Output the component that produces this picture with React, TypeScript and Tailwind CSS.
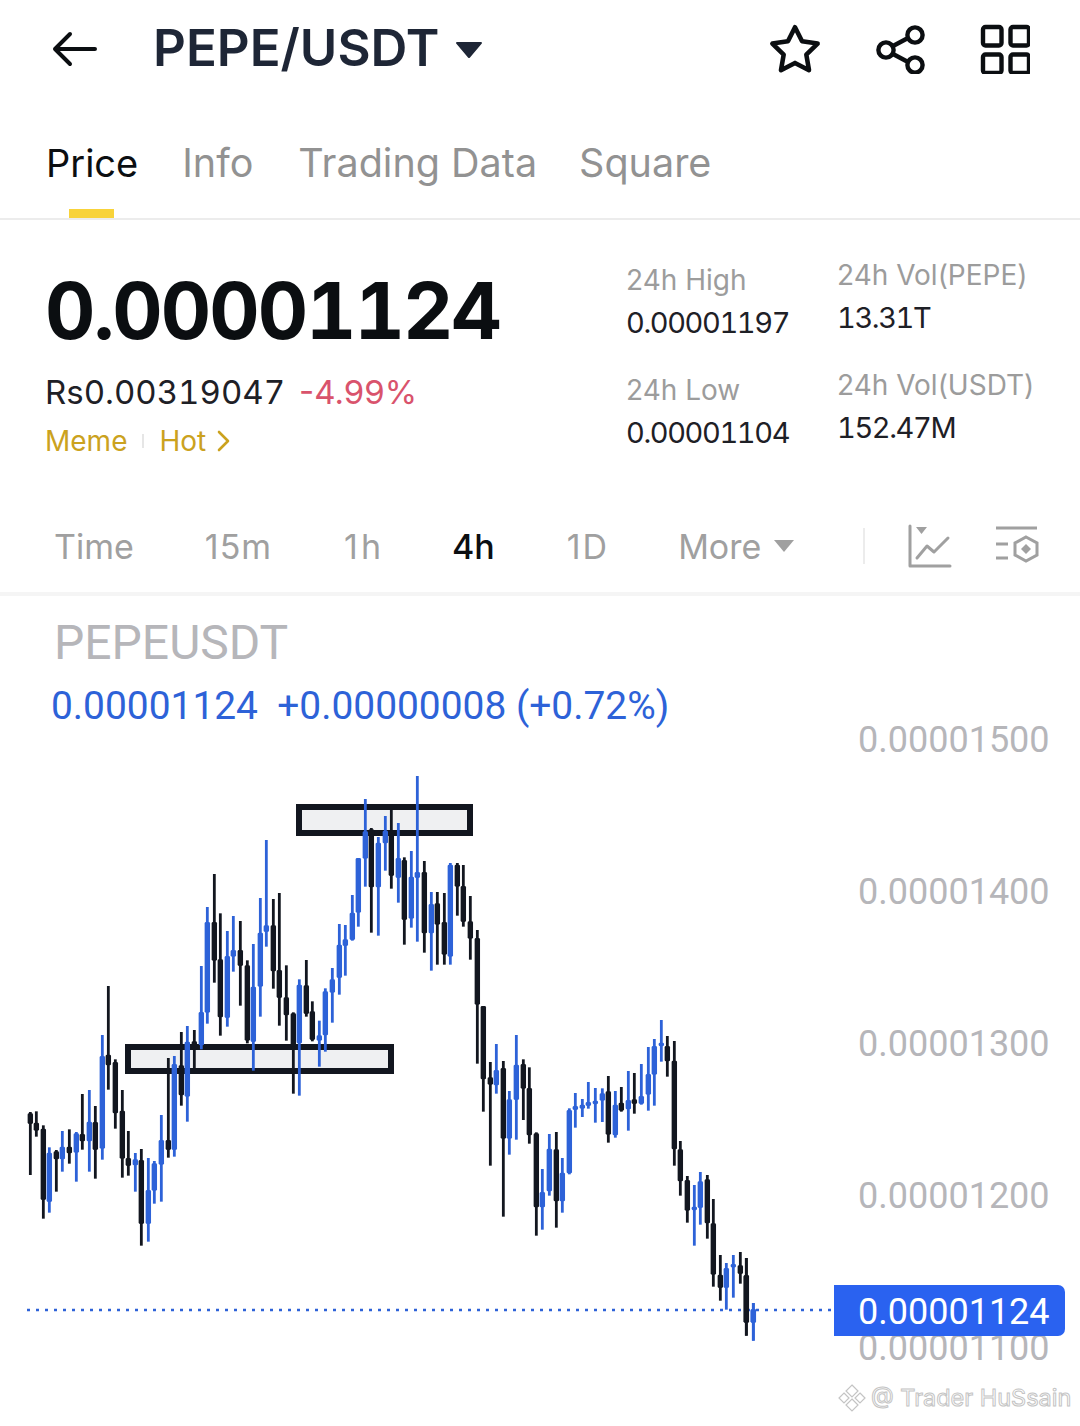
import React from "react";

const Z4: [number, number, number, number, number, string][] = [
  [31,1026,1215,1030,1062,"k"],[49,1024,1100,1058,1082,"k"],[70,1066,1346,1076,1290,"k"],[88,1132,1328,1148,1296,"b"],
  [109,1140,1265,1144,1168,"k"],[127,1083,1205,1130,1168,"b"],[148,1078,1181,1130,1150,"k"],[169,1086,1235,1090,1148,"b"],
  [187,972,1139,1092,1114,"k"],[208,960,1205,1055,1114,"b"],[226,1008,1226,1056,1140,"k"],[247,795,1169,858,1136,"b"],
  [265,648,959,854,886,"k"],[286,868,1076,876,1030,"k"],[307,960,1223,1022,1166,"k"],[325,1083,1217,1164,1188,"k"],
  [346,1149,1265,1168,1186,"b"],[364,1137,1427,1170,1362,"k"],[385,1164,1415,1260,1362,"b"],[403,1173,1301,1180,1262,"b"],
  [424,1035,1295,1110,1184,"b"],[445,864,1163,1110,1140,"k"],[463,858,1160,882,1140,"b"],[484,786,1007,886,976,"k"],
  [502,768,1055,815,980,"b"],[523,780,895,814,838,"k"],[544,588,838,726,826,"b"],[562,411,761,456,728,"b"],
  [583,312,638,456,572,"k"],[601,430,797,568,742,"k"],[622,483,770,558,744,"b"],[640,438,605,540,560,"b"],
  [661,453,707,540,588,"k"],[682,571,820,586,812,"k"],[700,522,902,650,816,"b"],[721,384,740,488,650,"b"],
  [739,210,530,466,486,"b"],[760,387,656,466,604,"k"],[778,369,767,600,684,"k"],
];
const Z5: [number, number, number, number, number, string][] = [
  [79,586,812,682,736,"k"],[100,727,971,730,830,"k"],[118,628,977,644,820,"b"],[139,570,740,646,732,"k"],
  [157,694,814,724,810,"k"],[178,752,890,796,812,"b"],[196,655,845,664,796,"b"],[217,594,758,628,668,"b"],
  [238,462,674,524,624,"b"],[256,465,617,508,528,"b"],[277,375,512,428,510,"b"],[295,264,470,264,428,"b"],
  [316,87,350,184,266,"b"],[334,174,488,178,352,"k"],[355,201,497,218,352,"b"],[376,138,302,182,220,"b"],
  [394,118,356,182,318,"k"],[415,159,398,264,324,"b"],[433,262,524,270,450,"k"],[454,243,473,320,446,"b"],
  [472,18,515,306,324,"b"],[493,273,548,306,490,"k"],[514,366,602,402,490,"b"],[532,366,584,400,464,"k"],
  [553,369,584,456,554,"k"],[571,279,584,284,560,"b"],[592,279,437,284,350,"k"],[610,285,470,348,456,"k"],
  [631,378,569,454,506,"k"],[652,480,881,504,704,"k"],[670,708,1025,708,928,"k"],[691,876,1187,922,944,"k"],
  [709,822,971,900,946,"b"],[730,873,1340,894,1106,"k"],[748,963,1154,988,1106,"b"],[769,795,1109,884,990,"b"],
];
const Z6: [number, number, number, number, number, string][] = [
  [70,148,330,162,236,"k"],[88,172,401,234,376,"k"],[109,367,677,370,592,"k"],[127,477,659,546,592,"b"],
  [148,372,557,416,544,"b"],[169,366,653,418,574,"k"],[187,444,608,488,574,"b"],[208,295,493,300,490,"b"],
  [226,249,353,288,300,"b"],[247,267,321,284,296,"b"],[265,216,296,276,288,"b"],[286,234,338,272,282,"b"],
  [307,235,336,250,272,"b"],[325,198,398,244,374,"k"],[346,243,383,284,376,"b"],[364,231,305,278,302,"k"],
  [385,183,362,270,298,"b"],[403,189,311,268,282,"k"],[424,162,284,258,282,"b"],[445,111,302,192,254,"b"],
  [463,87,287,108,194,"b"],[484,30,155,98,106,"b"],[502,78,200,108,154,"k"],[523,93,467,152,418,"k"],
  [541,393,557,418,514,"k"],[562,498,638,510,602,"k"],[583,525,707,590,600,"b"],[601,486,644,514,594,"b"],
  [622,495,686,508,640,"k"],[640,567,830,640,794,"k"],[661,735,872,794,834,"k"],[679,759,899,774,834,"b"],
  [700,735,863,762,772,"b"],[721,726,821,766,792,"k"],[739,744,977,796,938,"k"],[760,879,992,898,938,"b"],
];

const BLACK = "#12161f";
const BLUE = "#2d62d8";

function Candles({ data, ox, oy }: { data: typeof Z4; ox: number; oy: number }) {
  return (
    <>
      {data.map(([x, wt, wb, bt, bb, c], i) => {
        const px = ox + x / 3;
        const col = c === "k" ? BLACK : BLUE;
        return (
          <g key={i} fill={col}>
            <rect x={px - 1.4} y={oy + wt / 3} width={2.8} height={(wb - wt) / 3} />
            <rect x={px - 2.7} y={oy + bt / 3} width={5.4} height={Math.max((bb - bt) / 3, 3.5)} rx={1.4} />
          </g>
        );
      })}
    </>
  );
}

function Chart() {
  return (
    <svg className="absolute left-0 top-0" width={1080} height={830} viewBox="0 596 1080 830">
      <rect x={128} y={1047} width={263} height={24} fill="#eff0f2" stroke={BLACK} strokeWidth={6} />
      <rect x={299} y={807} width={171} height={26} fill="#eff0f2" stroke={BLACK} strokeWidth={6} />
      <Candles data={Z4} ox={20} oy={770} />
      <Candles data={Z5} ox={260} oy={770} />
      <Candles data={Z6} ox={500} oy={1010} />
      <line x1={27} y1={1310} x2={834} y2={1310} stroke={BLUE} strokeWidth={2.6} strokeDasharray="3 6" />
      <Candles data={[Z6[34], Z6[35]]} ox={500} oy={1010} />
    </svg>
  );
}

const AxisLabel = ({ v }: { v: string }) => (
  <div className="h-[152px] leading-[152px] text-[36px] text-[#b6b6ba]">{v}</div>
);

const Stat = ({ label, value }: { label: string; value: string }) => (
  <div>
    <div className="text-[28px] leading-[36px] text-[#9c9c9c]">{label}</div>
    <div className="mt-[7px] text-[29px] leading-[36px] text-[#1e2026] tabular-nums tracking-[-1.4px]">{value}</div>
  </div>
);

export default function App() {
  return (
    <div className="relative w-[1080px] h-[1426px] overflow-hidden bg-white font-['Inter',sans-serif]">
      {/* Header */}
      <div className="flex items-center h-[98px] pl-[52px] pr-[50px]">
        <svg width="46" height="36" viewBox="0 0 46 36" fill="none" stroke="#0b0e11" strokeWidth="4" strokeLinecap="round" strokeLinejoin="round">
          <path d="M43 18H3M18 3L3 18l15 15" />
        </svg>
        <div className="ml-[55px] mb-[2px] text-[51px] leading-[60px] font-semibold text-[#1e2636]">PEPE/USDT</div>
        <svg className="ml-[16px] mt-[2px]" width="28" height="18" viewBox="0 0 28 18" fill="#1e2636">
          <path d="M2 1h24a1 1 0 0 1 .8 1.6L15 16.5a1.4 1.4 0 0 1-2 0L1.2 2.6A1 1 0 0 1 2 1z" />
        </svg>
        <div className="ml-auto flex items-center gap-[53px]">
          <svg width="54" height="52" viewBox="0 0 52 50" fill="none" stroke="#0b0e11" strokeWidth="4.4" strokeLinejoin="round">
            <path d="M26 4l6.8 13.6 15 2.2-10.9 10.600 2.600 15L26 38.400l-13.500 7 2.600-15L4.200 19.800l15-2.200z" />
          </svg>
          <svg width="52" height="50" viewBox="0 0 52 50" fill="none" stroke="#0b0e11" strokeWidth="4.4">
            <circle cx="40" cy="11" r="7.600" />
            <circle cx="11" cy="26" r="7.600" />
            <circle cx="40" cy="41" r="7.600" />
            <path d="M18 22l15-8M18 30l15 8" />
          </svg>
          <svg width="50" height="50" viewBox="0 0 50 50" fill="none" stroke="#0b0e11" strokeWidth="4.4">
            <rect x="3" y="3" width="18.500" height="18.500" rx="2.500" />
            <rect x="30.500" y="3" width="18.500" height="18.500" rx="2.500" />
            <rect x="3" y="30.500" width="18.500" height="18.500" rx="2.500" />
            <rect x="30.500" y="30.500" width="18.500" height="18.500" rx="2.500" />
          </svg>
        </div>
      </div>

      {/* Tabs */}
      <div className="flex h-[122px] pl-[46px] border-b-2 border-[#ececec] text-[39.500px] leading-[46px] text-[#929292]">
        <div className="flex flex-col items-center justify-between pt-[42px] text-[38px] text-[#0b0e11]">
          <span>Price</span>
          <span className="block w-[45px] h-[9px] mr-[2px] bg-[#f8d33a]" />
        </div>
        <div className="pt-[42px] ml-[44px]">Info</div>
        <div className="pt-[42px] ml-[45px]">Trading Data</div>
        <div className="pt-[42px] ml-[42px]">Square</div>
      </div>

      {/* Stats */}
      <div className="flex h-[268px] pl-[45px]">
        <div className="w-[581px] pt-[44px]">
          <div className="text-[78px] leading-[94px] font-bold text-[#0b0e11] tabular-nums tracking-[-2px]">0.00001124</div>
          <div className="mt-[12px] flex items-center text-[33px] leading-[44px]">
            <span className="text-[#1e2026] tabular-nums">Rs0.00319047</span>
            <span className="ml-[14px] text-[#d9536c]">-4.99%</span>
          </div>
          <div className="mt-[9px] flex items-center text-[28px] leading-[36px] text-[#cba21e]">
            <span>Meme</span>
            <span className="mx-[15px] w-[2px] h-[14px] bg-[#e6e6e6]" />
            <span>Hot</span>
            <svg className="ml-[10px]" width="14" height="22" viewBox="0 0 14 22" fill="none" stroke="#cba21e" strokeWidth="2.600" strokeLinecap="round" strokeLinejoin="round">
              <path d="M3 2l9 9-9 9" />
            </svg>
          </div>
        </div>
        <div className="w-[211px] pt-[42px] flex flex-col gap-[31px]">
          <Stat label="24h High" value="0.00001197" />
          <Stat label="24h Low" value="0.00001104" />
        </div>
        <div className="pt-[37px] flex flex-col gap-[31px]">
          <Stat label="24h Vol(PEPE)" value="13.31T" />
          <Stat label="24h Vol(USDT)" value="152.47M" />
        </div>
      </div>

      {/* Intervals */}
      <div className="flex items-center h-[108px] pl-[54px] border-b-4 border-[#f5f5f5] text-[34px] text-[#a0a0a0] pt-[12px]">
        <span>Time</span>
        <span className="ml-[71px] tracking-[1px]">15m</span>
        <span className="ml-[72px] tracking-[3px]">1h</span>
        <span className="ml-[68px] text-[#0b0e11] font-medium">4h</span>
        <span className="ml-[72px] tracking-[2px]">1D</span>
        <span className="ml-[69px]">More</span>
        <svg className="ml-[12px]" width="22" height="14" viewBox="0 0 22 14" fill="#a0a0a0">
          <path d="M1 1h20l-10 12z" />
        </svg>
        <span className="ml-[68px] w-[2px] h-[36px] bg-[#ececec]" />
        <svg className="ml-[43px]" width="44" height="44" viewBox="0 0 44 44" fill="none" stroke="#a0a0a0" strokeWidth="3" strokeLinecap="round" strokeLinejoin="round">
          <path d="M2 2v40h40" />
          <path d="M9 34l10-12 7 6 14-14" />
          <path d="M8 3h11l-5.500 7z" fill="#a0a0a0" stroke="none" />
        </svg>
        <svg className="ml-[43px]" width="44" height="44" viewBox="0 0 44 44" fill="none" stroke="#a0a0a0" strokeWidth="3">
          <path d="M1 4h41M1 20h12M1 34h12" />
          <path d="M31 13l11 6v12l-11 6-11-6V19z" />
          <path d="M31 20l5 5-5 5-5-5z" fill="#a0a0a0" stroke="none" />
        </svg>
      </div>

      {/* Chart region */}
      <div className="relative h-[830px] font-['Roboto',sans-serif]">
        <Chart />
        <div className="relative pl-[54px] pt-[20px] text-[48px] leading-[54px] text-[#b6b6ba]">PEPEUSDT</div>
        <div className="relative pl-[51px] pt-[8px] text-[38.900px] leading-[56px] text-[#2d62d8] whitespace-pre">0.00001124  +0.00000008 (+0.72%)</div>
        <div className="absolute left-[858px] top-[68px]">
          {["0.00001500", "0.00001400", "0.00001300", "0.00001200", "0.00001100"].map((v) => (
            <AxisLabel key={v} v={v} />
          ))}
        </div>
        <div className="absolute left-[834px] top-[689px] w-[231px] h-[51px] pl-[24px] rounded-r-[7px] bg-[#2a62f0] text-[36px] leading-[54px] text-white">
          0.00001124
        </div>
        <div className="absolute left-[838px] top-[786px] flex items-center gap-[5px] whitespace-nowrap">
          <svg width="28" height="28" viewBox="0 0 28 28" fill="#fff" stroke="#c4c4c4" strokeWidth="1.200">
            <path d="M14 1l6 6-6 6-6-6zM6 9l5 5-5 5-5-5zM22 9l5 5-5 5-5-5zM14 15l6 6-6 6-6-6z" />
          </svg>
          <span className="text-[23.500px] leading-[32px] text-white font-['Inter',sans-serif] [-webkit-text-stroke:1px_#c4c4c4]">@ Trader HuSsain</span>
        </div>
      </div>
    </div>
  );
}
